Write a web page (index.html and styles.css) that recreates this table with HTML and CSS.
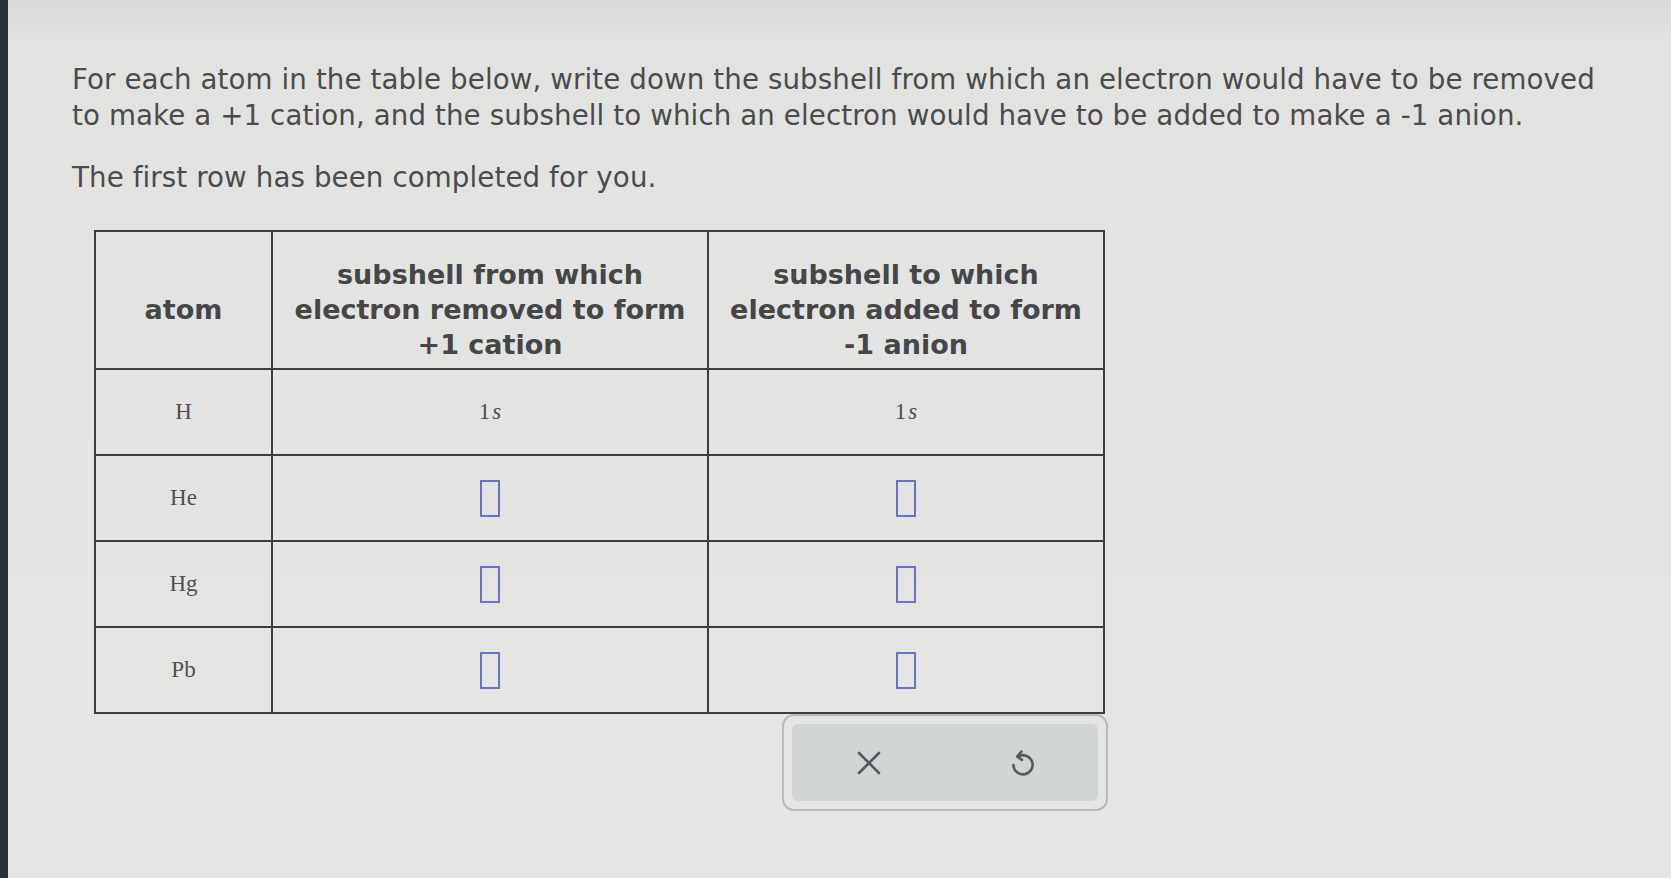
FILE: index.html
```html
<!DOCTYPE html>
<html>
<head>
<meta charset="utf-8">
<link rel="stylesheet" href="styles.css">
</head>
<body>
<div class="screen">
  <div class="content">
    <p class="prompt">For each atom in the table below, write down the subshell from which an electron would have to be removed<br>to make a +1 cation, and the subshell to which an electron would have to be added to make a -1 anion.</p>
    <p class="prompt note">The first row has been completed for you.</p>
    <div class="work">
      <table class="grid">
        <thead>
          <tr>
            <th class="c-atom">atom</th>
            <th class="c-cat">subshell from which<br>electron removed to form<br>+1 cation</th>
            <th class="c-an">subshell to which<br>electron added to form<br>-1 anion</th>
          </tr>
        </thead>
        <tbody>
          <tr><td>H</td><td>1<i>s</i></td><td>1<i>s</i></td></tr>
          <tr><td>He</td><td><span class="slot"></span></td><td><span class="slot"></span></td></tr>
          <tr><td>Hg</td><td><span class="slot"></span></td><td><span class="slot"></span></td></tr>
          <tr><td>Pb</td><td><span class="slot"></span></td><td><span class="slot"></span></td></tr>
        </tbody>
      </table>
      <div class="actions">
        <div class="actions-inner">
          <button class="icon-btn" aria-label="clear">
            <svg width="28" height="28" viewBox="0 0 28 28"><path d="M4 4 L24 24 M24 4 L4 24" stroke="#55595b" stroke-width="2.6" fill="none" stroke-linecap="round"/></svg>
          </button>
          <button class="icon-btn" aria-label="undo">
            <svg width="30" height="30" viewBox="0 0 30 30"><path d="M11 8.6 A9.6 9.6 0 1 1 6.4 17" stroke="#55595b" stroke-width="2.6" fill="none" stroke-linecap="round"/><path d="M14.4 3.6 L10.2 8.6 L15 11.8" stroke="#55595b" stroke-width="2.6" fill="none" stroke-linecap="round" stroke-linejoin="round"/></svg>
          </button>
        </div>
      </div>
    </div>
  </div>
</div>
</body>
</html>
```
FILE: styles.css
```css
html, body {
  margin: 0;
  padding: 0;
  height: 100%;
}
body {
  background: #e3e4e2;
  font-family: "DejaVu Sans", Verdana, sans-serif;
  color: #4a4b4c;
}
.screen {
  min-height: 100%;
  border-left: 8px solid #2b3036;
  background: linear-gradient(180deg, #d8d9d7 0px, #e2e3e1 40px, #e5e6e4 100%);
  box-sizing: border-box;
}
.content {
  padding: 62px 0 0 64px;
}
.prompt {
  margin: 0;
  font-size: 27.7px;
  line-height: 36px;
  letter-spacing: 0.1px;
}
.note {
  margin-top: 26px;
}
.work {
  display: inline-flex;
  flex-direction: column;
  align-items: flex-end;
  margin: 34px 0 0 22px;
}
.grid {
  border-collapse: collapse;
  border: 2px solid #3c3d3e;
}
.grid th, .grid td {
  border: 2px solid #3c3d3e;
  text-align: center;
  vertical-align: middle;
}
.grid th {
  font-family: "DejaVu Sans", Verdana, sans-serif;
  font-weight: bold;
  font-size: 27px;
  line-height: 35px;
  color: #454647;
  height: 118px;
  padding: 18px 0 0 0;
}
.c-atom { width: 175px; }
.c-cat { width: 434px; }
.c-an { width: 394px; }
.grid td {
  font-family: "Liberation Serif", "Times New Roman", serif;
  font-size: 23px;
  color: #4f5052;
  height: 84px;
  padding: 0;
}
.grid td i {
  font-style: italic;
  margin-left: 2px;
}
.slot {
  display: inline-block;
  width: 16px;
  height: 33px;
  border: 2px solid #6b70c4;
  vertical-align: middle;
}
.actions {
  width: 326px;
  height: 97px;
  margin-right: -3px;
  border: 2px solid #b7bab9;
  border-radius: 12px;
  padding: 8px;
  box-sizing: border-box;
}
.actions-inner {
  height: 100%;
  background: #d2d5d5;
  border-radius: 6px;
  display: flex;
  align-items: center;
  justify-content: space-around;
}
.icon-btn {
  background: none;
  border: none;
  padding: 0;
  width: 40px;
  height: 40px;
  display: flex;
  align-items: center;
  justify-content: center;
}
```
